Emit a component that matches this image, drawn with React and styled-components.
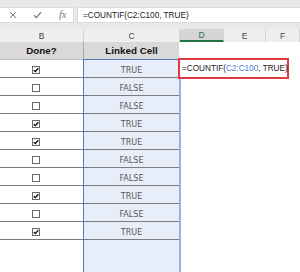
import React from "react";
import styled, { createGlobalStyle } from "styled-components";

const Global = createGlobalStyle`
  html, body { margin: 0; padding: 0; background: #fff; }
  body { font-family: "Liberation Sans", Arial, sans-serif; }
`;

const Sheet = styled.div`
  width: 300px;
  height: 272px;
  overflow: hidden;
  background: #fff;
  display: flex;
  flex-direction: column;
`;

/* ---------- formula bar ---------- */
const FormulaBar = styled.div`
  display: flex;
  gap: 3px;
  padding: 7px 0 6px 0;
  background: #e9e9e9;
`;

const IconBox = styled.div`
  width: 74px;
  height: 16px;
  box-sizing: border-box;
  background: #fff;
  border: 1px solid #d9d9d9;
  border-left: none;
  display: grid;
  grid-template-columns: repeat(3, 25px);
  align-items: center;
  justify-items: center;
`;

const Fx = styled.span`
  font-family: "Liberation Serif", "Times New Roman", serif;
  font-style: italic;
  font-size: 10.5px;
  line-height: 10px;
  color: #7a7a7a;
  letter-spacing: -0.4px;
`;

const FormulaInput = styled.div`
  flex: 1;
  height: 16px;
  box-sizing: border-box;
  background: #fff;
  border: 1px solid #d9d9d9;
  border-right: none;
  padding-left: 5px;
  display: flex;
  align-items: center;
  font-size: 8.2px;
  color: #222;
  white-space: nowrap;
`;

/* ---------- column letters ---------- */
const ColHeaders = styled.div`
  display: grid;
  grid-template-columns: 84px 96px 44px 42px 1fr;
  height: 13px;
  background: #efefef;
`;

const ColHead = styled.div`
  box-sizing: border-box;
  border-right: 1px solid #d4d4d4;
  display: flex;
  align-items: center;
  justify-content: center;
  font-size: 8.5px;
  color: ${(p) => (p.$active ? "#217346" : "#444")};
  background: ${(p) => (p.$active ? "#d6d6d6" : "transparent")};
  border-bottom: ${(p) => (p.$active ? "2px solid #217346" : "none")};
`;

/* ---------- row 1 (titles) ---------- */
const TitleRow = styled.div`
  display: grid;
  grid-template-columns: 84px 95px 1fr;
  height: 17px;
`;

const TitleCell = styled.div`
  box-sizing: border-box;
  background: ${(p) => (p.$blank ? "#fff" : "#d9d9d9")};
  border-right: ${(p) => (p.$divider ? "1px solid #a9a9a9" : "none")};
  display: flex;
  align-items: center;
  justify-content: center;
  font-weight: bold;
  font-size: 9.8px;
  color: #111;
`;

/* ---------- data body ---------- */
const Body = styled.div`
  flex: 1;
  display: flex;
`;

const DoneCol = styled.div`
  width: 83px;
  border-top: 1px solid #bdbdbd;
  display: flex;
  flex-direction: column;
`;

const LinkedCol = styled.div`
  width: 98px;
  box-sizing: border-box;
  background: #e8eef9;
  border-top: 1px solid #4a78c8;
  border-left: 1px solid #4a78c8;
  border-right: 2px solid #8fb3e6;
  display: flex;
  flex-direction: column;
`;

const RestCol = styled.div`
  flex: 1;
  position: relative;
`;

const Cell = styled.div`
  height: 18px;
  box-sizing: border-box;
  border-bottom: 1px solid #7c7c7c;
  flex: none;
`;

const CheckCell = styled(Cell)`
  padding: 6px 0 0 32px;
`;

const ValueCell = styled(Cell)`
  display: flex;
  align-items: flex-end;
  justify-content: center;
  padding-bottom: 2px;
  font-family: "Liberation Sans Narrow", "DejaVu Sans Condensed", "Liberation Sans", sans-serif;
  font-size: 9px;
  line-height: 10px;
  color: #595959;
`;

const Box = styled.div`
  width: 8px;
  height: 8px;
  box-sizing: border-box;
  border: 1px solid #6a6a6a;
  background: #fff;
  display: flex;
  align-items: center;
  justify-content: center;
`;

/* the cell being edited, outlined in red */
const EditBox = styled.div`
  position: absolute;
  left: -3px;
  top: -1px;
  width: 111px;
  height: 21px;
  box-sizing: border-box;
  border: 2px solid #e0393e;
  display: flex;
  align-items: flex-end;
  padding: 0 0 3px 2px;
  font-size: 8.2px;
  line-height: 10px;
  color: #222;
  white-space: nowrap;
  background: #fff;
`;

const Ref = styled.span`
  color: #4a7fd0;
`;

const Cross = () => (
  <svg width="8" height="8" viewBox="0 0 8 8">
    <path d="M1 1 L7 7 M7 1 L1 7" stroke="#7a7a7a" strokeWidth="1" fill="none" />
  </svg>
);

const Tick = () => (
  <svg width="9" height="8" viewBox="0 0 9 8">
    <path d="M1 4.2 L3.4 6.6 L8 1.2" stroke="#7a7a7a" strokeWidth="1.3" fill="none" />
  </svg>
);

const Check = () => (
  <svg width="6" height="6" viewBox="0 0 6 6">
    <path d="M0.8 3.2 L2.3 4.6 L5.3 1.2" stroke="#111" strokeWidth="1.4" fill="none" />
  </svg>
);

const values = [true, false, false, true, true, false, false, true, false, true];

export default function App() {
  return (
    <>
      <Global />
      <Sheet>
        <FormulaBar>
          <IconBox>
            <Cross />
            <Tick />
            <Fx>fx</Fx>
          </IconBox>
          <FormulaInput>=COUNTIF(C2:C100, TRUE)</FormulaInput>
        </FormulaBar>

        <ColHeaders>
          <ColHead>B</ColHead>
          <ColHead>C</ColHead>
          <ColHead $active>D</ColHead>
          <ColHead>E</ColHead>
          <ColHead>F</ColHead>
        </ColHeaders>

        <TitleRow>
          <TitleCell $divider>Done?</TitleCell>
          <TitleCell>Linked Cell</TitleCell>
          <TitleCell $blank />
        </TitleRow>

        <Body>
          <DoneCol>
            {values.map((v, i) => (
              <CheckCell key={i}>
                <Box>{v && <Check />}</Box>
              </CheckCell>
            ))}
          </DoneCol>
          <LinkedCol>
            {values.map((v, i) => (
              <ValueCell key={i}>{v ? "TRUE" : "FALSE"}</ValueCell>
            ))}
          </LinkedCol>
          <RestCol>
            <EditBox>
              =COUNTIF(<Ref>C2:C100</Ref>, TRUE)
            </EditBox>
          </RestCol>
        </Body>
      </Sheet>
    </>
  );
}
